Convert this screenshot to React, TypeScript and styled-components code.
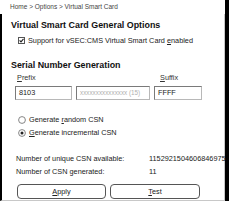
import React from "react";
import styled, { createGlobalStyle } from "styled-components";

const Global = createGlobalStyle`
  html, body { margin: 0; padding: 0; background: #fff; }
  body { font-family: "Liberation Sans", Arial, sans-serif; color: #222; }
`;

const Frame = styled.div`
  width: 225px;
  border-right: 4px solid #000;
  display: flex;
  flex-direction: column;
`;

const Breadcrumb = styled.div`
  height: 14px;
  line-height: 14px;
  padding-left: 10px;
  font-size: 6.5px;
  color: #444;
  white-space: nowrap;
`;

const Panel = styled.div`
  border-left: 2px solid #000;
  border-right: 1px solid #c8c8c8;
  border-bottom: 1px solid #c8c8c8;
  padding: 5px 0 1px 0;
  display: flex;
  flex-direction: column;
  font-size: 7.3px;
`;

const Heading = styled.div<{ $mt: number }>`
  margin-top: ${(p) => p.$mt}px;
  height: 12px;
  line-height: 12px;
  padding-left: 9px;
  font-size: 8.9px;
  font-weight: bold;
  color: #111;
  white-space: nowrap;
`;

const OptionRow = styled.div<{ $mt: number }>`
  margin-top: ${(p) => p.$mt}px;
  height: 11px;
  display: flex;
  align-items: center;
  gap: 3px;
  padding-left: 16px;
  white-space: nowrap;
`;

const U = styled.span`
  text-decoration: underline;
`;

const Labels = styled.div`
  margin-top: 2px;
  height: 10px;
  line-height: 10px;
  display: grid;
  grid-template-columns: 57px 78px 48px;
  column-gap: 4px;
  padding-left: 13px;
  color: #333;
`;

const LabelCell = styled.div`
  padding-left: 2px;
`;

const Inputs = styled.div`
  margin-top: 3px;
  display: grid;
  grid-template-columns: 57px 74px 48px;
  column-gap: 4px;
  padding-left: 13px;
`;

const Field = styled.div<{ $disabled?: boolean }>`
  box-sizing: border-box;
  height: 14px;
  line-height: 12px;
  border: 1px solid #b8b8b8;
  border-top-color: #7a7a7a;
  border-left-color: #7a7a7a;
  padding-left: 3px;
  font-size: ${(p) => (p.$disabled ? "6.3px" : "7.3px")};
  color: ${(p) => (p.$disabled ? "#b0b0b0" : "#222")};
  background: #fff;
  white-space: nowrap;
  overflow: hidden;
`;

const StatRow = styled.div<{ $mt: number }>`
  margin-top: ${(p) => p.$mt}px;
  height: 11px;
  line-height: 11px;
  display: grid;
  grid-template-columns: 133px auto;
  padding-left: 14px;
  white-space: nowrap;
`;

const Buttons = styled.div`
  margin-top: 7px;
  display: grid;
  grid-template-columns: 89px 90px;
  column-gap: 4px;
  padding-left: 15px;
`;

const Button = styled.div`
  box-sizing: border-box;
  height: 15px;
  border: 1px solid #555;
  border-radius: 4px;
  display: flex;
  align-items: center;
  justify-content: center;
  font-size: 7.3px;
  color: #222;
  background: #fff;
`;

const Check = () => (
  <svg width="7" height="7" viewBox="0 0 7 7">
    <rect x="0.5" y="0.5" width="6" height="6" fill="#fff" stroke="#555" strokeWidth="1" />
    <path d="M1.6 3.3 L3 4.8 L5.5 1.8" fill="none" stroke="#222" strokeWidth="1.1" />
  </svg>
);

const Radio = ({ on }: { on?: boolean }) => (
  <svg width="8" height="8" viewBox="0 0 8 8">
    <circle cx="4" cy="4" r="3.4" fill="#fff" stroke="#777" strokeWidth="0.9" />
    {on && <circle cx="4" cy="4" r="1.5" fill="#222" />}
  </svg>
);

export default function App() {
  return (
    <>
      <Global />
      <Frame>
        <Breadcrumb>Home &gt; Options &gt; Virtual Smart Card</Breadcrumb>
        <Panel>
          <Heading $mt={0}>Virtual Smart Card General Options</Heading>
          <OptionRow $mt={4}>
            <Check />
            <span>
              Support for vSEC:CMS Virtual Smart Card <U>e</U>nabled
            </span>
          </OptionRow>
          <Heading $mt={13}>Serial Number Generation</Heading>
          <Labels>
            <LabelCell>
              <U>P</U>refix
            </LabelCell>
            <LabelCell />
            <LabelCell>
              <U>S</U>uffix
            </LabelCell>
          </Labels>
          <Inputs>
            <Field>8103</Field>
            <Field $disabled>xxxxxxxxxxxxxxx (15)</Field>
            <Field>FFFF</Field>
          </Inputs>
          <OptionRow $mt={14}>
            <Radio />
            <span>
              Generate <U>r</U>andom CSN
            </span>
          </OptionRow>
          <OptionRow $mt={2}>
            <Radio on />
            <span>
              <U>G</U>enerate incremental CSN
            </span>
          </OptionRow>
          <StatRow $mt={15}>
            <span>Number of unique CSN available:</span>
            <span>1152921504606846975</span>
          </StatRow>
          <StatRow $mt={2}>
            <span>Number of CSN generated:</span>
            <span>11</span>
          </StatRow>
          <Buttons>
            <Button>
              <span>
                <U>A</U>pply
              </span>
            </Button>
            <Button>
              <span>
                <U>T</U>est
              </span>
            </Button>
          </Buttons>
        </Panel>
      </Frame>
    </>
  );
}
